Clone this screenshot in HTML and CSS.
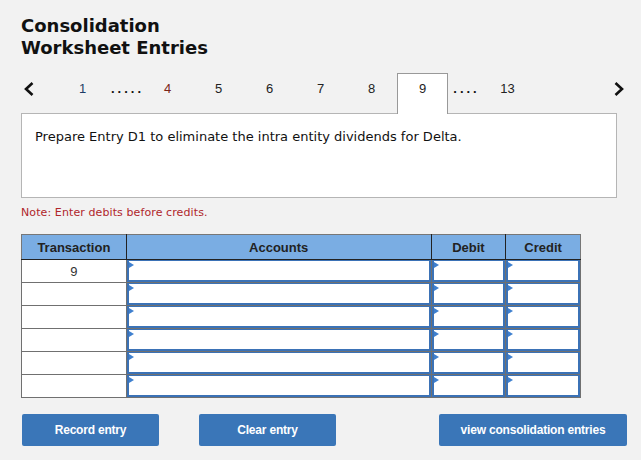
FILE: index.html
```html
<!DOCTYPE html>
<html lang="en">
<head>
  <meta charset="UTF-8" />
  <meta name="viewport" content="width=device-width, initial-scale=1.0" />
  <title>Consolidation Worksheet Entries</title>
  <link rel="stylesheet" href="styles.css">
</head>
<body>
  <div class="page">
    <h1 class="title">Consolidation<br>Worksheet Entries</h1>

    <!-- entry tabs -->
    <div class="tabs">
      <span class="arrow prev">
        <svg width="10" height="14" viewBox="0 0 10 14"><polyline points="8.5,1 2,7 8.5,13" /></svg>
      </span>
      <span class="tab tab-blue">1</span>
      <span class="dots">.....</span>
      <span class="tab tab-red">4</span>
      <span class="tab">5</span>
      <span class="tab">6</span>
      <span class="tab">7</span>
      <span class="tab">8</span>
      <span class="tab active">9</span>
      <span class="dots">....</span>
      <span class="tab">13</span>
      <span class="arrow next">
        <svg width="10" height="14" viewBox="0 0 10 14"><polyline points="1.5,1 8,7 1.5,13" /></svg>
      </span>
    </div>

    <div class="prompt">Prepare Entry D1 to eliminate the intra entity dividends for Delta.</div>

    <p class="note">Note: Enter debits before credits.</p>

    <table class="entries">
      <thead>
        <tr>
          <th class="col-trans">Transaction</th>
          <th class="col-acct">Accounts</th>
          <th class="col-amt">Debit</th>
          <th class="col-amt">Credit</th>
        </tr>
      </thead>
      <tbody>
        <tr>
          <td class="trans">9</td>
          <td><div class="field"><input type="text"></div></td>
          <td><div class="field"><input type="text"></div></td>
          <td><div class="field"><input type="text"></div></td>
        </tr>
        <tr>
          <td class="trans"></td>
          <td><div class="field"><input type="text"></div></td>
          <td><div class="field"><input type="text"></div></td>
          <td><div class="field"><input type="text"></div></td>
        </tr>
        <tr>
          <td class="trans"></td>
          <td><div class="field"><input type="text"></div></td>
          <td><div class="field"><input type="text"></div></td>
          <td><div class="field"><input type="text"></div></td>
        </tr>
        <tr>
          <td class="trans"></td>
          <td><div class="field"><input type="text"></div></td>
          <td><div class="field"><input type="text"></div></td>
          <td><div class="field"><input type="text"></div></td>
        </tr>
        <tr>
          <td class="trans"></td>
          <td><div class="field"><input type="text"></div></td>
          <td><div class="field"><input type="text"></div></td>
          <td><div class="field"><input type="text"></div></td>
        </tr>
        <tr>
          <td class="trans"></td>
          <td><div class="field"><input type="text"></div></td>
          <td><div class="field"><input type="text"></div></td>
          <td><div class="field"><input type="text"></div></td>
        </tr>
      </tbody>
    </table>

    <div class="actions">
      <button class="btn">Record entry</button>
      <button class="btn btn-clear">Clear entry</button>
      <button class="btn btn-view">view consolidation entries</button>
    </div>
  </div>
</body>
</html>
```

FILE: styles.css
```css
body {
  margin: 0;
  background: #f2f2f2;
  font-family: "DejaVu Sans", Verdana, sans-serif;
  color: #111;
}
.page {
  padding: 15px 0 0 21px;
  width: 596px;
}
.title {
  margin: 0;
  font-size: 18px;
  line-height: 22px;
  font-weight: bold;
  color: #111;
}
.tabs {
  display: flex;
  align-items: flex-start;
  height: 40px;
  margin-top: 14px;
  margin-right: -7px;
  font-family: "Liberation Sans", Arial, sans-serif;
  font-size: 13px;
  line-height: 16px;
}
.arrow {
  padding-top: 9px;
}
.arrow svg {
  display: block;
}
.arrow polyline {
  fill: none;
  stroke: #111;
  stroke-width: 2.6;
}
.prev {
  width: 33px;
  padding-left: 3px;
}
.next {
  margin-left: auto;
}
.tab {
  width: 51px;
  height: 41px;
  box-sizing: border-box;
  padding-top: 8px;
  text-align: center;
  color: #222;
}
.tab-blue {
  color: #1d3c66;
}
.tab-red {
  color: #7a2418;
}
.tab.active {
  position: relative;
  z-index: 1;
  background: #fff;
  border: 1px solid #999;
  border-bottom: none;
  padding-top: 7px;
}
.dots {
  width: 34px;
  padding-top: 8px;
  text-align: center;
  font-weight: bold;
  letter-spacing: 3px;
  text-indent: 3px;
}
.prompt {
  height: 85px;
  box-sizing: border-box;
  background: #fff;
  border: 1px solid #b5b5b5;
  padding: 15px 13px;
  font-size: 13px;
  line-height: 16px;
  color: #111;
}
.note {
  margin: 8px 0 0;
  font-size: 11px;
  line-height: 14px;
  letter-spacing: 0.1px;
  color: #b0262b;
}
.entries {
  margin-top: 14px;
  width: 560px;
  border-collapse: collapse;
  font-family: "Liberation Sans", Arial, sans-serif;
  font-size: 13px;
}
.entries th {
  height: 24px;
  padding: 0;
  background: #7aade3;
  color: #222;
  font-weight: bold;
  border: 1px solid #222;
  border-top-color: #777;
}
.entries th:first-child {
  border-left-color: #777;
}
.entries th:last-child {
  border-right-color: #777;
}
.col-trans {
  width: 104px;
}
.col-acct {
  width: 306px;
}
.col-amt {
  width: 74px;
}
.entries td {
  height: 22px;
  padding: 0;
  border: 1px solid #707070;
  background: #fff;
}
.entries td.trans {
  text-align: center;
  color: #333;
}
.field {
  position: relative;
  height: 22px;
}
.field::before {
  content: "";
  position: absolute;
  left: 2px;
  top: 2px;
  border-left: 5px solid #3f80cf;
  border-top: 3px solid transparent;
  border-bottom: 3px solid transparent;
}
.field input {
  display: block;
  width: 100%;
  height: 22px;
  box-sizing: border-box;
  margin: 0;
  border: 2px solid #3b72b6;
  border-top-width: 1px;
  background: #fff;
  outline: none;
}
.actions {
  display: flex;
  margin-top: 16px;
  padding-left: 1px;
}
.btn {
  flex-shrink: 0;
  height: 32px;
  width: 137px;
  border: none;
  border-radius: 2px;
  background: #3a76b8;
  color: #fff;
  font-family: "Liberation Sans", Arial, sans-serif;
  font-size: 12px;
  font-weight: bold;
  letter-spacing: -0.2px;
  cursor: pointer;
}
.btn-clear {
  margin-left: 40px;
}
.btn-view {
  width: 188px;
  margin-left: 103px;
}
```
